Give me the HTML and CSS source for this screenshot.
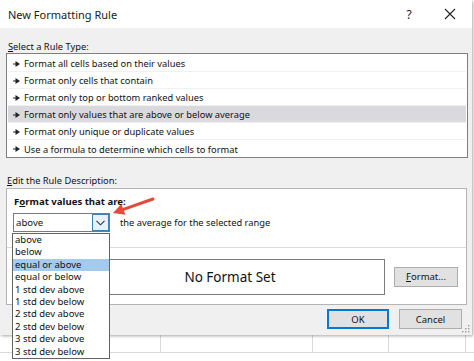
FILE: index.html
```html
<!DOCTYPE html>
<html>
<head>
<meta charset="utf-8">
<link rel="stylesheet" href="styles.css">
</head>
<body>
<div class="dialog">
  <div class="titlebar">
    <span class="title">New Formatting Rule</span>
    <span class="help">?</span>
    <svg class="close" width="12" height="12" viewBox="0 0 12 12"><path d="M1 1L11 11M11 1L1 11" stroke="#222" stroke-width="1.1" fill="none"/></svg>
  </div>
  <div class="body">
    <div class="label"><u>S</u>elect a Rule Type:</div>
    <div class="rulelist">
      <div class="rule"><svg class="tri" width="7" height="6" viewBox="0 0 7 6"><path d="M0 3H3" stroke="#222" stroke-width="1"/><path d="M2.5 0L7 3L2.5 6Z" fill="#222"/></svg>Format all cells based on their values</div>
      <div class="rule"><svg class="tri" width="7" height="6" viewBox="0 0 7 6"><path d="M0 3H3" stroke="#222" stroke-width="1"/><path d="M2.5 0L7 3L2.5 6Z" fill="#222"/></svg>Format only cells that contain</div>
      <div class="rule"><svg class="tri" width="7" height="6" viewBox="0 0 7 6"><path d="M0 3H3" stroke="#222" stroke-width="1"/><path d="M2.5 0L7 3L2.5 6Z" fill="#222"/></svg>Format only top or bottom ranked values</div>
      <div class="rule selected"><svg class="tri" width="7" height="6" viewBox="0 0 7 6"><path d="M0 3H3" stroke="#222" stroke-width="1"/><path d="M2.5 0L7 3L2.5 6Z" fill="#222"/></svg>Format only values that are above or below average</div>
      <div class="rule"><svg class="tri" width="7" height="6" viewBox="0 0 7 6"><path d="M0 3H3" stroke="#222" stroke-width="1"/><path d="M2.5 0L7 3L2.5 6Z" fill="#222"/></svg>Format only unique or duplicate values</div>
      <div class="rule last"><svg class="tri" width="7" height="6" viewBox="0 0 7 6"><path d="M0 3H3" stroke="#222" stroke-width="1"/><path d="M2.5 0L7 3L2.5 6Z" fill="#222"/></svg>Use a formula to determine which cells to format</div>
    </div>
    <div class="label label2"><u>E</u>dit the Rule Description:</div>
    <div class="desc">
      <div class="desc-top">
        <div class="bold">F<u>o</u>rmat values that are:</div>
        <div class="combo-row">
          <div class="combo">
            <span class="combo-val">above</span>
            <span class="combo-btn"><svg width="9" height="6" viewBox="0 0 9 6"><path d="M0.5 0.8L4.5 4.8L8.5 0.8" stroke="#333" stroke-width="1.1" fill="none"/></svg></span>
          </div>
          <span class="combo-text">the average for the selected range</span>
        </div>
      </div>
      <div class="desc-bottom">
        <div class="preview">No Format Set</div>
        <div class="btn fmt"><u>F</u>ormat...</div>
      </div>
    </div>
    <div class="actions">
      <div class="btn ok">OK</div>
      <div class="btn cancel">Cancel</div>
    </div>
    <svg class="grip" width="8" height="8" viewBox="0 0 8 8"><g fill="#9a9a9a"><rect x="6" y="0" width="1.4" height="1.4"/><rect x="3" y="3" width="1.4" height="1.4"/><rect x="6" y="3" width="1.4" height="1.4"/><rect x="0" y="6" width="1.4" height="1.4"/><rect x="3" y="6" width="1.4" height="1.4"/><rect x="6" y="6" width="1.4" height="1.4"/></g></svg>
  </div>
</div>
<div class="sheet">
  <div class="col c1"></div>
  <div class="col c2"></div>
  <div class="col c3"></div>
  <div class="col c4"></div>
  <div class="col c5"></div>
</div>
<div class="droplist">
  <div class="opt">above</div>
  <div class="opt">below</div>
  <div class="opt hi">equal or above</div>
  <div class="opt">equal or below</div>
  <div class="opt">1 std dev above</div>
  <div class="opt">1 std dev below</div>
  <div class="opt">2 std dev above</div>
  <div class="opt">2 std dev below</div>
  <div class="opt">3 std dev above</div>
  <div class="opt">3 std dev below</div>
</div>
<svg class="arrow" width="55" height="30" viewBox="0 0 55 30">
  <path d="M18.4 17.4L48 7" stroke="#e5493a" stroke-width="3" stroke-linecap="round" fill="none"/>
  <path d="M8 21L20.4 22.8L16.4 12Z" fill="#e5493a"/>
</svg>
</body>
</html>
```
FILE: styles.css
```css
* { box-sizing: border-box; }
html, body {
  margin: 0;
  padding: 0;
}
body {
  width: 474px;
  height: 361px;
  overflow: hidden;
  background: #ffffff;
  font-family: "Noto Sans", "Open Sans", sans-serif;
  color: #111;
  position: relative;
}
u { text-decoration: underline; text-underline-offset: 1px; }

.dialog {
  width: 472px;
  height: 335px;
  display: flex;
  flex-direction: column;
  box-shadow: 1px 1px 3px rgba(0,0,0,0.35);
  position: relative;
  z-index: 1;
}
.titlebar {
  height: 28px;
  background: #fff;
  display: flex;
  align-items: center;
  padding-left: 8px;
  font-size: 11px;
  color: #1b1b1b;
}
.title { flex: 1; }
.help { width: 16px; text-align: center; font-size: 12px; margin-right: 27px; }
.close { margin-right: 16px; }

.body {
  flex: 1;
  background: #f0f0f0;
  padding: 0 4px 0 6px;
  position: relative;
  font-size: 9.3px;
}
.label {
  height: 25px;
  padding: 11px 0 0 2px;
  line-height: 15px;
  font-size: 9.3px;
}
.label2 {
  height: 30px;
  padding-top: 15px;
  padding-left: 1px;
}
.rulelist {
  width: 462px;
  height: 105px;
  border: 1px solid #7f7f7f;
  background: #fff;
  padding: 1px 1px;
}
.rule {
  height: 17px;
  display: flex;
  align-items: center;
  border-bottom: 1px solid #f1f1f1;
  font-size: 9.3px;
  padding-left: 5px;
  padding-top: 1px;
}
.rule.last { border-bottom: none; }
.rule.selected { background: #dadade; }
.tri { margin-right: 4px; }

.desc {
  width: 461px;
  height: 117px;
  background: #fff;
  border: 1px solid #b4b4b4;
  display: flex;
  flex-direction: column;
}
.desc-top {
  height: 59px;
  border-bottom: 1px solid #dcdcdc;
  padding: 6px 0 0 6px;
}
.bold {
  font-weight: bold;
  line-height: 14px;
  padding-left: 1px;
  font-size: 9.6px;
}
.combo-row {
  display: flex;
  align-items: center;
  margin-top: 4px;
}
.combo {
  width: 97px;
  height: 19px;
  border: 1px solid #7a7a7a;
  display: flex;
  align-items: center;
  justify-content: space-between;
}
.combo-val { padding-left: 2px; font-size: 9.6px; }
.combo-btn {
  width: 17px;
  height: 17px;
  background: #e5f1fb;
  border: 1px solid #3c7fb1;
  display: flex;
  align-items: center;
  justify-content: center;
}
.combo-text { margin-left: 10px; font-size: 9.3px; }

.desc-bottom {
  flex: 1;
  display: flex;
  align-items: center;
  padding-left: 68px;
  padding-top: 1px;
}
.preview {
  width: 310px;
  height: 36px;
  border: 1px solid #7a7a7a;
  display: flex;
  align-items: center;
  justify-content: center;
  font-size: 13.5px;
}
.btn {
  background: #e1e1e1;
  border: 1px solid #adadad;
  display: flex;
  align-items: center;
  justify-content: center;
  font-size: 9.5px;
  height: 20px;
}
.fmt { width: 64px; margin-left: 9px; }
.actions {
  display: flex;
  justify-content: flex-end;
  gap: 10px;
  padding: 4px 6px 0 0;
}
.ok { width: 62px; border: 2px solid #0078d7; }
.cancel { width: 63px; }
.grip { position: absolute; right: 2px; bottom: 2px; }

.sheet {
  display: grid;
  grid-template-columns: 160px 152px 76px 77px 9px;
  border-bottom: 1px solid #d9d9d9;
  height: 18px;
}
.col { border-left: 1px solid #d9d9d9; }
.c1 { border-left: none; }

.droplist {
  position: absolute;
  left: 12px;
  top: 233px;
  width: 98px;
  height: 126px;
  background: #fff;
  border: 1px solid #646464;
  z-index: 2;
}
.opt {
  height: 12.4px;
  line-height: 12.4px;
  font-size: 9.5px;
  padding-left: 2px;
  white-space: nowrap;
}
.opt.hi { background: #a3cbef; }
.arrow {
  position: absolute;
  left: 105px;
  top: 192px;
  z-index: 3;
}
```
